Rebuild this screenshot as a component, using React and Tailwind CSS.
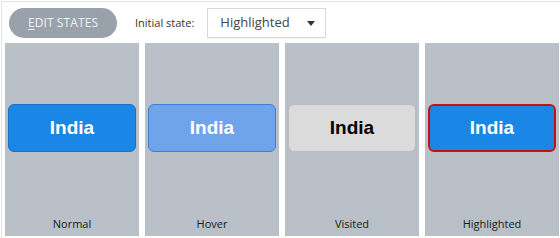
export default function App() {
  const states = [
    { label: "Normal", cls: "bg-[#1a86e6] border border-[#1c6fc2] text-white" },
    { label: "Hover", cls: "bg-[#6fa3ea] border border-[#3d7fd1] text-white" },
    { label: "Visited", cls: "bg-[#dbdbdb] border border-[#bcbcbc] text-black" },
    { label: "Highlighted", cls: "bg-[#1a86e6] border-2 border-[#cc1111] text-white" },
  ];
  return (
    <div className="w-[560px] h-[238px] bg-white pt-px pl-px overflow-hidden" style={{ fontFamily: '"Open Sans", "Noto Sans", sans-serif' }}>
      <div className="border-t border-l border-[#e4e4e4] h-[237px]">
        <div className="flex items-center h-[41px] pl-[7px] pt-px">
          <button className="w-[108px] h-[30px] rounded-full bg-[#99a2ab] text-[#eef1f3] text-[12px] tracking-[0.1px]">
            <span className="underline underline-offset-2">E</span>DIT STATES
          </button>
          <span className="ml-[18px] text-[11px] text-[#333]">Initial state:</span>
          <div className="ml-[13px] w-[119px] h-[30px] border border-[#d6d9dc] bg-white flex items-center pl-[12px] pr-[10px] justify-between shadow-[0_1px_1px_rgba(0,0,0,0.04)]">
            <span className="text-[13px] text-[#444]">Highlighted</span>
            <svg width="8" height="5" viewBox="0 0 8 5"><path d="M0 0H8L4 5Z" fill="#333" /></svg>
          </div>
        </div>
        <div className="flex gap-[6px] pl-[3px]">
          {states.map((s) => (
            <div key={s.label} className="w-[134px] h-[193px] bg-[#b9c0c7] flex flex-col items-center">
              <div
                className={`mt-[61px] w-[128px] h-[48px] rounded-[6px] flex items-center justify-center text-[19px] font-bold ${s.cls}`}
                style={{ fontFamily: '"Liberation Sans", Arial, sans-serif' }}
              >
                India
              </div>
              <div className="mt-auto mb-[4px] text-[11px] text-[#1a1a1a]">{s.label}</div>
            </div>
          ))}
        </div>
      </div>
    </div>
  );
}
